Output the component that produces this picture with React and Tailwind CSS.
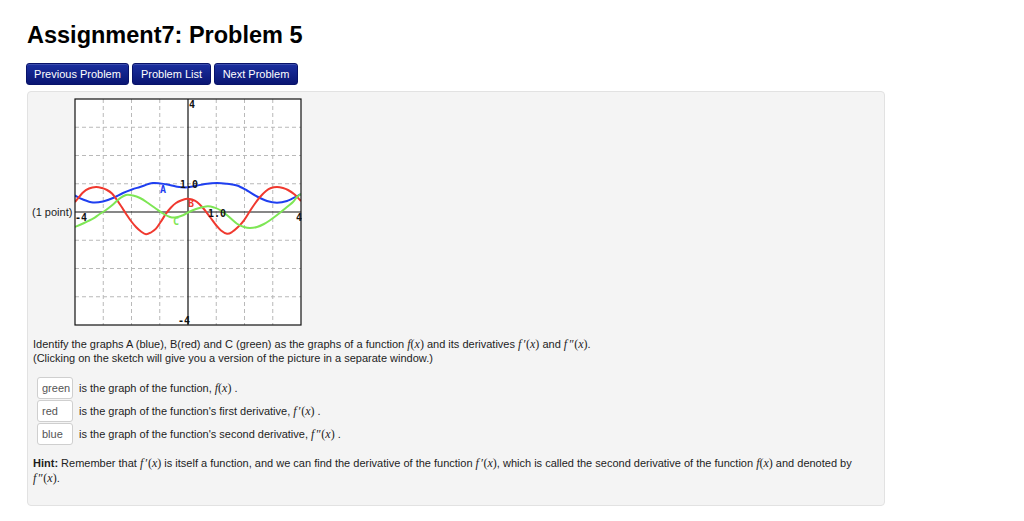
import React from "react";

// Smooth path through sample points (Catmull-Rom converted to cubic Bézier)
function smoothPath(pts) {
  let d = `M${pts[0][0]},${pts[0][1]}`;
  for (let i = 0; i < pts.length - 1; i++) {
    const p0 = pts[i - 1] || pts[i];
    const p1 = pts[i];
    const p2 = pts[i + 1];
    const p3 = pts[i + 2] || p2;
    const c1x = p1[0] + (p2[0] - p0[0]) / 6;
    const c1y = p1[1] + (p2[1] - p0[1]) / 6;
    const c2x = p2[0] - (p3[0] - p1[0]) / 6;
    const c2y = p2[1] - (p3[1] - p1[1]) / 6;
    d += ` C${c1x.toFixed(2)},${c1y.toFixed(2)} ${c2x.toFixed(2)},${c2y.toFixed(2)} ${p2[0]},${p2[1]}`;
  }
  return d;
}

const BLUE = [
  [76, 196.5], [84, 200.5], [94, 203.5], [104, 202.5], [114, 199], [124, 194],
  [133, 190.5], [141, 188], [154, 184], [167, 185.3], [177, 187.5], [186, 188.5],
  [196, 187], [206, 185], [218, 184], [228, 184.8], [238, 186.5], [248, 191.5],
  [258, 197.5], [268, 202], [278, 203.7], [288, 202], [298, 197.3], [302, 195],
];

const RED = [
  [76, 203], [84, 193.5], [90, 189.5], [97, 188], [103, 189], [108, 191],
  [113, 194.5], [117, 199.7], [122, 207], [127, 214.7], [132, 222], [137, 228],
  [142, 232.5], [147, 235.3], [152, 233.5], [157, 229.7], [162, 222.5], [167, 214.7],
  [172, 208.5], [177, 204], [182, 201.5], [188, 199.7], [193, 200.5], [198, 203],
  [204, 209], [211, 218], [217, 226], [222, 231.5], [228, 234.7], [233, 233],
  [239, 228], [245, 221.3], [251, 212], [256, 204.5], [261, 198], [267, 192],
  [272, 189], [278, 188], [284, 189], [289, 191], [295, 195], [302, 202],
];

const GREEN = [
  [76, 228], [84, 224.5], [94, 219.7], [100, 215.5], [107, 211], [114, 205.5],
  [120, 200], [127, 196], [134, 196.5], [141, 199], [149, 204], [157, 209.7],
  [164, 214.5], [171, 218], [176, 218.5], [184, 216.3], [190, 213], [197, 210],
  [204, 208], [209, 207.3], [215, 208.5], [221, 211], [229, 217], [238, 224.7],
  [245, 228], [251, 229], [258, 228], [265, 225], [271, 221.3], [280, 214.5],
  [288, 208], [294, 203], [298, 198], [302, 195],
];

const STEP = 28.25;
const GRID = [1, 2, 3, 5, 6, 7];

function Graph() {
  const lbl = {
    fontFamily: "'DejaVu Sans Mono', monospace",
    fontWeight: 700,
    fontSize: 10,
  };
  return (
    <svg width="228" height="228" viewBox="75 99 228 228" className="block shrink-0">
      <rect x="76" y="100" width="226" height="226" fill="#ffffff" />
      <defs>
        <clipPath id="plot">
          <rect x="76" y="100" width="226" height="226" />
        </clipPath>
      </defs>
      {GRID.map((k) => (
        <g key={k}>
          <line x1={76 + STEP * k} y1="100" x2={76 + STEP * k} y2="326" stroke="#b9b9b9" strokeWidth="1" strokeDasharray="4 3" />
          <line x1="76" y1={100 + STEP * k} x2="302" y2={100 + STEP * k} stroke="#b9b9b9" strokeWidth="1" strokeDasharray="4 3" />
        </g>
      ))}
      <line x1="189" y1="100" x2="189" y2="326" stroke="#111" strokeWidth="1.2" />
      <line x1="76" y1="213" x2="302" y2="213" stroke="#111" strokeWidth="1.2" />
      <g clipPath="url(#plot)" fill="none" strokeWidth="2" strokeLinejoin="round">
        <path d={smoothPath(BLUE)} stroke="#1f3ff0" />
        <path d={smoothPath(RED)} stroke="#f0392f" />
        <path d={smoothPath(GREEN)} stroke="#7ee655" />
      </g>
      <rect x="76" y="100" width="226" height="226" fill="none" stroke="#111" strokeWidth="1.2" />
      <text x="190" y="109" style={lbl} fill="#111">4</text>
      <text x="179" y="325" style={lbl} fill="#111">-4</text>
      <text x="76" y="222" style={lbl} fill="#111">-4</text>
      <text x="297" y="222" style={lbl} fill="#111">4</text>
      <text x="181" y="189" style={lbl} fill="#111">1.0</text>
      <text x="209" y="218" style={lbl} fill="#111">1.0</text>
      <text x="161" y="194" style={lbl} fill="#1f3ff0">A</text>
      <text x="189" y="208" style={lbl} fill="#f0392f">B</text>
      <text x="174" y="226" style={lbl} fill="#7ee655">C</text>
    </svg>
  );
}

// f, f′, f″ of x typeset in a serif italic
function F({ primes = 0 }) {
  const mark = primes === 1 ? "′" : primes === 2 ? "″" : "";
  return (
    <span className="font-['Liberation_Serif',serif] text-[12px] whitespace-nowrap">
      <i>f</i>
      {mark && <span className="ml-[2px]">{mark}</span>}
      (<i>x</i>)
    </span>
  );
}

function Answer({ value, children }) {
  return (
    <div className="flex items-center">
      <div className="w-[36px] h-[22px] ml-[4px] bg-white border border-[#cfcfcf] rounded-[3px] pl-[4px] flex items-center text-[11px] text-[#555]">
        {value}
      </div>
      <div className="ml-[6px] text-[11px]">{children}</div>
    </div>
  );
}

export default function App() {
  const btn =
    "h-[22px] px-0 whitespace-nowrap rounded-[3px] border border-[#08136a] bg-gradient-to-b from-[#1b2fa0] to-[#0a1673] text-white text-[11px] leading-[20px] text-center shadow-[inset_0_1px_0_rgba(255,255,255,0.15)]";
  return (
    <div className="min-h-[521px] bg-white font-['Liberation_Sans',Arial,sans-serif] text-[#1d1d1d]">
      <div className="pl-[27px] pt-[21px]">
        <h1 className="text-[23.5px] leading-[28px] font-bold text-black">Assignment7: Problem 5</h1>
        <div className="mt-[14px] flex gap-[3px] -ml-px">
          <button className={`${btn} w-[103px]`}>Previous Problem</button>
          <button className={`${btn} w-[79px]`}>Problem List</button>
          <button className={`${btn} w-[84px]`}>Next Problem</button>
        </div>
        <div className="mt-[6px] w-[858px] bg-[#f4f4f4] border border-[#e2e2e2] rounded-[4px] pl-[5px] pt-[6px] pb-[19px]">
          <div className="flex items-center">
            <span className="w-[42px] -ml-[1px] text-[11px] whitespace-nowrap">(1 point)</span>
            <Graph />
          </div>
          <div className="mt-[11px] text-[11px] leading-[14px]">
            <p>
              Identify the graphs A (blue), B(red) and C (green) as the graphs of a function <F /> and its derivatives <F primes={1} /> and <F primes={2} />.
            </p>
            <p>(Clicking on the sketch will give you a version of the picture in a separate window.)</p>
          </div>
          <div className="mt-[12px] flex flex-col gap-[1px]">
            <Answer value="green">
              is the graph of the function, <F /> .
            </Answer>
            <Answer value="red">
              is the graph of the function's first derivative, <F primes={1} /> .
            </Answer>
            <Answer value="blue">
              is the graph of the function's second derivative, <F primes={2} /> .
            </Answer>
          </div>
          <p className="mt-[11px] text-[11px] leading-[15px] pr-[30px]">
            <b>Hint:</b> Remember that <F primes={1} /> is itself a function, and we can find the derivative of the function <F primes={1} />, which is called the second derivative of the function <F /> and denoted by <F primes={2} />.
          </p>
        </div>
      </div>
    </div>
  );
}
